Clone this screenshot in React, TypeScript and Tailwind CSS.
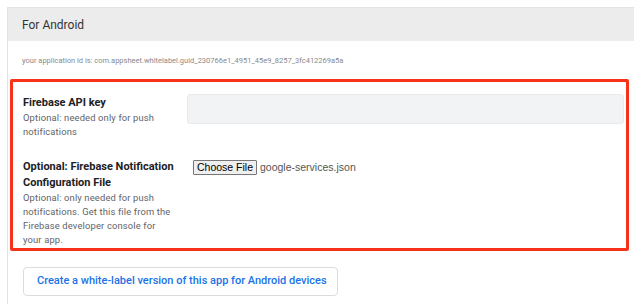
export default function App() {
  return (
    <div className="h-[304px] w-[634px] overflow-hidden bg-white pl-[7px] pt-[7px] font-['Roboto',sans-serif]">
      <div className="h-full border-l border-t border-[#e3e3e3]">
        <div className="flex h-[33px] items-center bg-[#ececec] pl-[14px] text-[12px] text-[#333]">
          For Android
        </div>
        <div className="pl-[14px] pt-[15px] text-[7.5px] leading-[10px] text-[#8a8a8a]">
          your application id is: com.appsheet.whitelabel.guid_230766e1_4951_45e9_8257_3fc412269a5a
        </div>

        <div className="ml-[2px] mt-[13px] w-[619px] rounded-[2px] border-[3px] border-[#f8311a] pb-[1px] pl-[10px] pr-[2px] pt-[13px]">
          <div className="grid grid-cols-[164px_1fr]">
            <div>
              <div className="text-[11px] font-bold leading-[16px] text-[#202124]">Firebase API key</div>
              <div className="w-[150px] text-[9.4px] leading-[14px] tracking-[0.15px] text-[#5f6368]">
                Optional: needed only for push notifications
              </div>
            </div>
            <div className="-mt-[1px] h-[30px] rounded-[3px] border border-[#e8eaed] bg-[#f1f3f4]" />
          </div>

          <div className="mt-[20px] grid grid-cols-[164px_1fr]">
            <div>
              <div className="w-[160px] text-[11px] font-bold leading-[16px] text-[#202124]">
                Optional: Firebase Notification Configuration File
              </div>
              <div className="w-[150px] text-[9.4px] leading-[14px] tracking-[0.15px] text-[#5f6368]">
                Optional: only needed for push notifications. Get this file from the Firebase developer console for your app.
              </div>
            </div>
            <div className="ml-[6px] mt-[1px] flex h-[15px] items-center gap-[3px] font-['Liberation_Sans',sans-serif] text-[10.5px]">
              <span className="flex h-[15px] w-[64px] items-center justify-center rounded-[1px] border border-[#767676] bg-[#efefef] text-black">
                Choose File
              </span>
              <span className="text-[#555]">google-services.json</span>
            </div>
          </div>
        </div>

        <div className="ml-[15px] mt-[16px] flex h-[29px] w-[315px] items-center rounded-[4px] border border-[#dadce0] pl-[13px] text-[11px] font-medium text-[#1a73e8]">
          Create a white-label version of this app for Android devices
        </div>
      </div>
    </div>
  );
}
